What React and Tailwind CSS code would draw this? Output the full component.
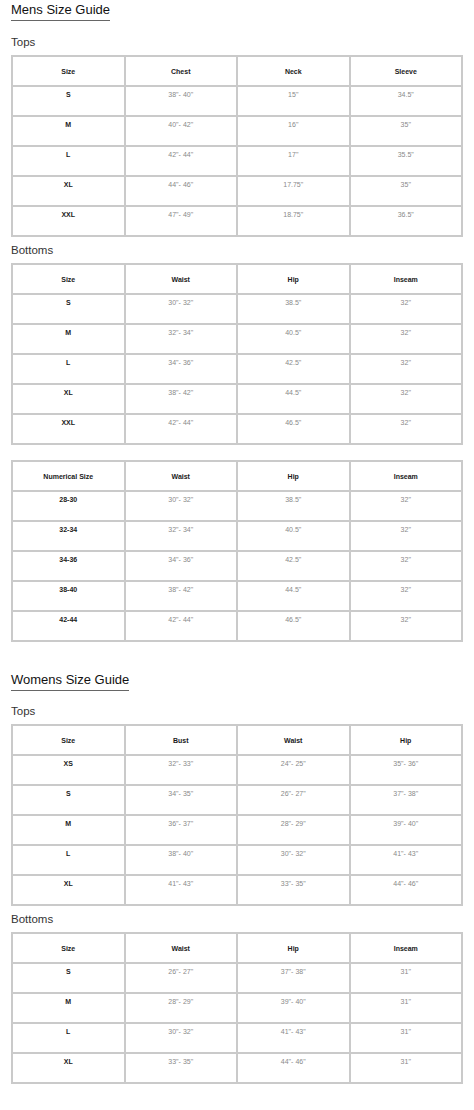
import React from "react";

const MENS_TOPS = {
  head: ["Size", "Chest", "Neck", "Sleeve"],
  rows: [
    ["S", "38\"- 40\"", "15\"", "34.5\""],
    ["M", "40\"- 42\"", "16\"", "35\""],
    ["L", "42\"- 44\"", "17\"", "35.5\""],
    ["XL", "44\"- 46\"", "17.75\"", "35\""],
    ["XXL", "47\"- 49\"", "18.75\"", "36.5\""],
  ],
};

const MENS_BOTTOMS = {
  head: ["Size", "Waist", "Hip", "Inseam"],
  rows: [
    ["S", "30\"- 32\"", "38.5\"", "32\""],
    ["M", "32\"- 34\"", "40.5\"", "32\""],
    ["L", "34\"- 36\"", "42.5\"", "32\""],
    ["XL", "38\"- 42\"", "44.5\"", "32\""],
    ["XXL", "42\"- 44\"", "46.5\"", "32\""],
  ],
};

const MENS_NUMERICAL = {
  head: ["Numerical Size", "Waist", "Hip", "Inseam"],
  rows: [
    ["28-30", "30\"- 32\"", "38.5\"", "32\""],
    ["32-34", "32\"- 34\"", "40.5\"", "32\""],
    ["34-36", "34\"- 36\"", "42.5\"", "32\""],
    ["38-40", "38\"- 42\"", "44.5\"", "32\""],
    ["42-44", "42\"- 44\"", "46.5\"", "32\""],
  ],
};

const WOMENS_TOPS = {
  head: ["Size", "Bust", "Waist", "Hip"],
  rows: [
    ["XS", "32\"- 33\"", "24\"- 25\"", "35\"- 36\""],
    ["S", "34\"- 35\"", "26\"- 27\"", "37\"- 38\""],
    ["M", "36\"- 37\"", "28\"- 29\"", "39\"- 40\""],
    ["L", "38\"- 40\"", "30\"- 32\"", "41\"- 43\""],
    ["XL", "41\"- 43\"", "33\"- 35\"", "44\"- 46\""],
  ],
};

const WOMENS_BOTTOMS = {
  head: ["Size", "Waist", "Hip", "Inseam"],
  rows: [
    ["S", "26\"- 27\"", "37\"- 38\"", "31\""],
    ["M", "28\"- 29\"", "39\"- 40\"", "31\""],
    ["L", "30\"- 32\"", "41\"- 43\"", "31\""],
    ["XL", "33\"- 35\"", "44\"- 46\"", "31\""],
  ],
};

const SizeTable = ({ data, className = "" }) => (
  <table className={`w-[452px] table-fixed border-collapse text-[7px] ${className}`}>
    <thead>
      <tr className="h-[30px]">
        {data.head.map((h) => (
          <th
            key={h}
            className="border-2 border-[#cacaca] align-middle text-center font-bold text-[#1a1a1a] leading-[9px]"
          >
            {h}
          </th>
        ))}
      </tr>
    </thead>
    <tbody>
      {data.rows.map((row) => (
        <tr key={row[0]} className="h-[30px]">
          {row.map((cell, i) => (
            <td
              key={i}
              className={`border-2 border-[#cacaca] align-top pt-[3px] text-center leading-[9px] ${
                i === 0 ? "font-bold text-[#1a1a1a]" : "text-[#8a8a8a]"
              }`}
            >
              {cell}
            </td>
          ))}
        </tr>
      ))}
    </tbody>
  </table>
);

const GuideTitle = ({ children, className = "" }) => (
  <div
    className={`w-fit border-b border-[#666] text-[13px] leading-[16px] text-[#111] pb-[2px] ${className}`}
  >
    {children}
  </div>
);

const SubTitle = ({ children, className = "" }) => (
  <div className={`text-[11.5px] leading-[14px] text-[#333] ${className}`}>{children}</div>
);

export default function App() {
  return (
    <div className="w-[474px] min-h-[1110px] bg-white pl-[11px] pt-[2px] font-['Liberation_Sans',Arial,sans-serif]">
      <GuideTitle>Mens Size Guide</GuideTitle>
      <SubTitle className="mt-[14px]">Tops</SubTitle>
      <SizeTable data={MENS_TOPS} className="mt-[6px]" />
      <SubTitle className="mt-[6px]">Bottoms</SubTitle>
      <SizeTable data={MENS_BOTTOMS} className="mt-[6px]" />
      <SizeTable data={MENS_NUMERICAL} className="mt-[15px]" />

      <GuideTitle className="mt-[30px]">Womens Size Guide</GuideTitle>
      <SubTitle className="mt-[13px]">Tops</SubTitle>
      <SizeTable data={WOMENS_TOPS} className="mt-[6px]" />
      <SubTitle className="mt-[6px]">Bottoms</SubTitle>
      <SizeTable data={WOMENS_BOTTOMS} className="mt-[6px]" />
    </div>
  );
}
